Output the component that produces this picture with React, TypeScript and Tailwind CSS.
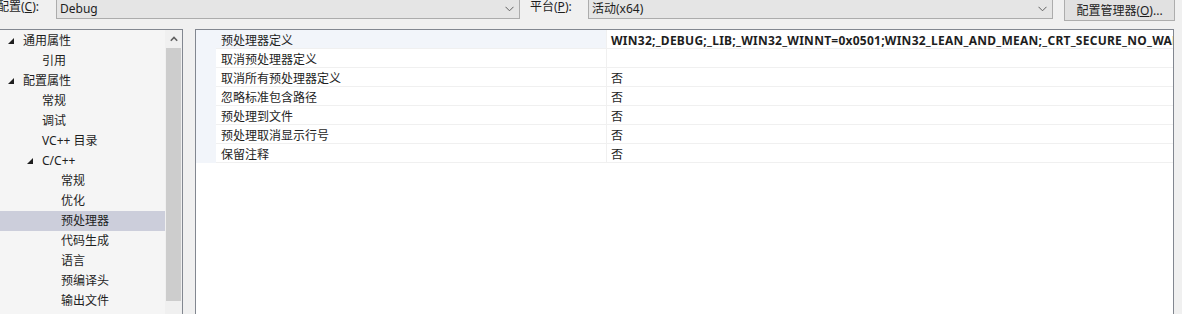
import React from "react";

const cjk = { fontFamily: '"Segoe UI","Noto Sans","Noto Sans CJK SC",sans-serif' };

function Chevron() {
  return (
    <svg width="9" height="6" viewBox="0 0 9 6" className="shrink-0">
      <path d="M0.5 0.8 L4.5 4.8 L8.5 0.8" fill="none" stroke="#606060" strokeWidth="1" />
    </svg>
  );
}

function Tri() {
  return (
    <svg width="6" height="6" viewBox="0 0 6 6" className="shrink-0">
      <polygon points="6,0 6,6 0,6" fill="#1e1e1e" />
    </svg>
  );
}

type Item = { label: string; level: number; expanded?: boolean; selected?: boolean };

const tree: Item[] = [
  { label: "通用属性", level: 0, expanded: true },
  { label: "引用", level: 1 },
  { label: "配置属性", level: 0, expanded: true },
  { label: "常规", level: 1 },
  { label: "调试", level: 1 },
  { label: "VC++ 目录", level: 1 },
  { label: "C/C++", level: 1, expanded: true },
  { label: "常规", level: 2 },
  { label: "优化", level: 2 },
  { label: "预处理器", level: 2, selected: true },
  { label: "代码生成", level: 2 },
  { label: "语言", level: 2 },
  { label: "预编译头", level: 2 },
  { label: "输出文件", level: 2 },
];

const props: [string, string][] = [
  ["预处理器定义", "WIN32;_DEBUG;_LIB;_WIN32_WINNT=0x0501;WIN32_LEAN_AND_MEAN;_CRT_SECURE_NO_WARNINGS;%(PreprocessorDefinitions)"],
  ["取消预处理器定义", ""],
  ["取消所有预处理器定义", "否"],
  ["忽略标准包含路径", "否"],
  ["预处理到文件", "否"],
  ["预处理取消显示行号", "否"],
  ["保留注释", "否"],
];

export default function App() {
  return (
    <div
      className="w-[1182px] h-[314px] bg-[#f0f0f0] overflow-hidden text-[12px] text-[#1e1e1e] leading-none"
      style={cjk}
    >
      {/* top bar */}
      <div className="h-[29px] flex items-start">
        <div className="w-[56px] h-[14px] flex items-center -ml-[3px] whitespace-nowrap">
          配置(<span className="underline">C</span>):
        </div>
        <div className="-mt-[5px] ml-[3px] w-[464px] h-[24px] bg-[#e5e5e5] border border-[#acacac] flex items-center pl-[3px] pr-[5px] pt-[4px]">
          <span className="flex-1">Debug</span>
          <Chevron />
        </div>
        <div className="w-[68px] h-[14px] flex items-center pl-[10px] whitespace-nowrap">
          平台(<span className="underline">P</span>):
        </div>
        <div className="-mt-[5px] w-[465px] h-[24px] bg-[#e5e5e5] border border-[#acacac] flex items-center pl-[3px] pr-[5px] pt-[4px]">
          <span className="flex-1">活动(x64)</span>
          <Chevron />
        </div>
        <div className="-mt-[4px] ml-[11px] w-[111px] h-[25px] bg-[#e1e1e1] border border-[#adadad] flex items-center justify-center pt-[4px] whitespace-nowrap">
          配置管理器(<span className="underline">O</span>)...
        </div>
      </div>

      {/* main */}
      <div className="flex h-[285px]">
        {/* tree panel */}
        <div className="w-[183px] h-[300px] border-t border-r border-[#828790] bg-[#f5f5f5] flex">
          <div className="w-[165px] pt-[1px]">
            {tree.map((it, i) => (
              <div
                key={i}
                className={`h-[20px] flex items-center ${it.selected ? "bg-[#cccedb]" : ""}`}
                style={{ paddingLeft: 8 + it.level * 19 }}
              >
                <div className="w-[15px] flex items-center">{it.expanded ? <Tri /> : null}</div>
                <span className="whitespace-nowrap">{it.label}</span>
              </div>
            ))}
          </div>
          <div className="w-[17px] bg-[#f0f0f0] flex flex-col items-center">
            <div className="h-[18px] flex items-center justify-center">
              <svg width="8" height="6" viewBox="0 0 8 6">
                <path d="M0.8 4.8 L4 1.4 L7.2 4.8" fill="none" stroke="#606060" strokeWidth="1.6" />
              </svg>
            </div>
            <div className="w-[15px] h-[253px] bg-[#cdcdcd]" />
          </div>
        </div>

        <div className="w-[12px]" />

        {/* property grid */}
        <div className="w-[979px] h-[300px] border-t border-l border-r border-[#828790] bg-white">
          {props.map(([name, value], i) => (
            <div key={i} className="h-[19px] flex">
              <div className="w-[20px] bg-[#f2f5fa] border-b border-[#f2f5fa]" />
              <div
                className={`w-[391px] pl-[5px] pt-[3px] flex items-center border-b border-r border-[#f0f0f0] whitespace-nowrap ${
                  i === 0 ? "bg-[#f2f5fa]" : ""
                }`}
              >
                {name}
              </div>
              <div
                className={`flex-1 min-w-0 overflow-hidden pl-[4px] pt-[3px] flex items-center border-b border-[#f0f0f0] whitespace-nowrap ${
                  i === 0 ? "font-bold tracking-[0.25px]" : ""
                }`}
              >
                {value}
              </div>
            </div>
          ))}
        </div>
      </div>
    </div>
  );
}
